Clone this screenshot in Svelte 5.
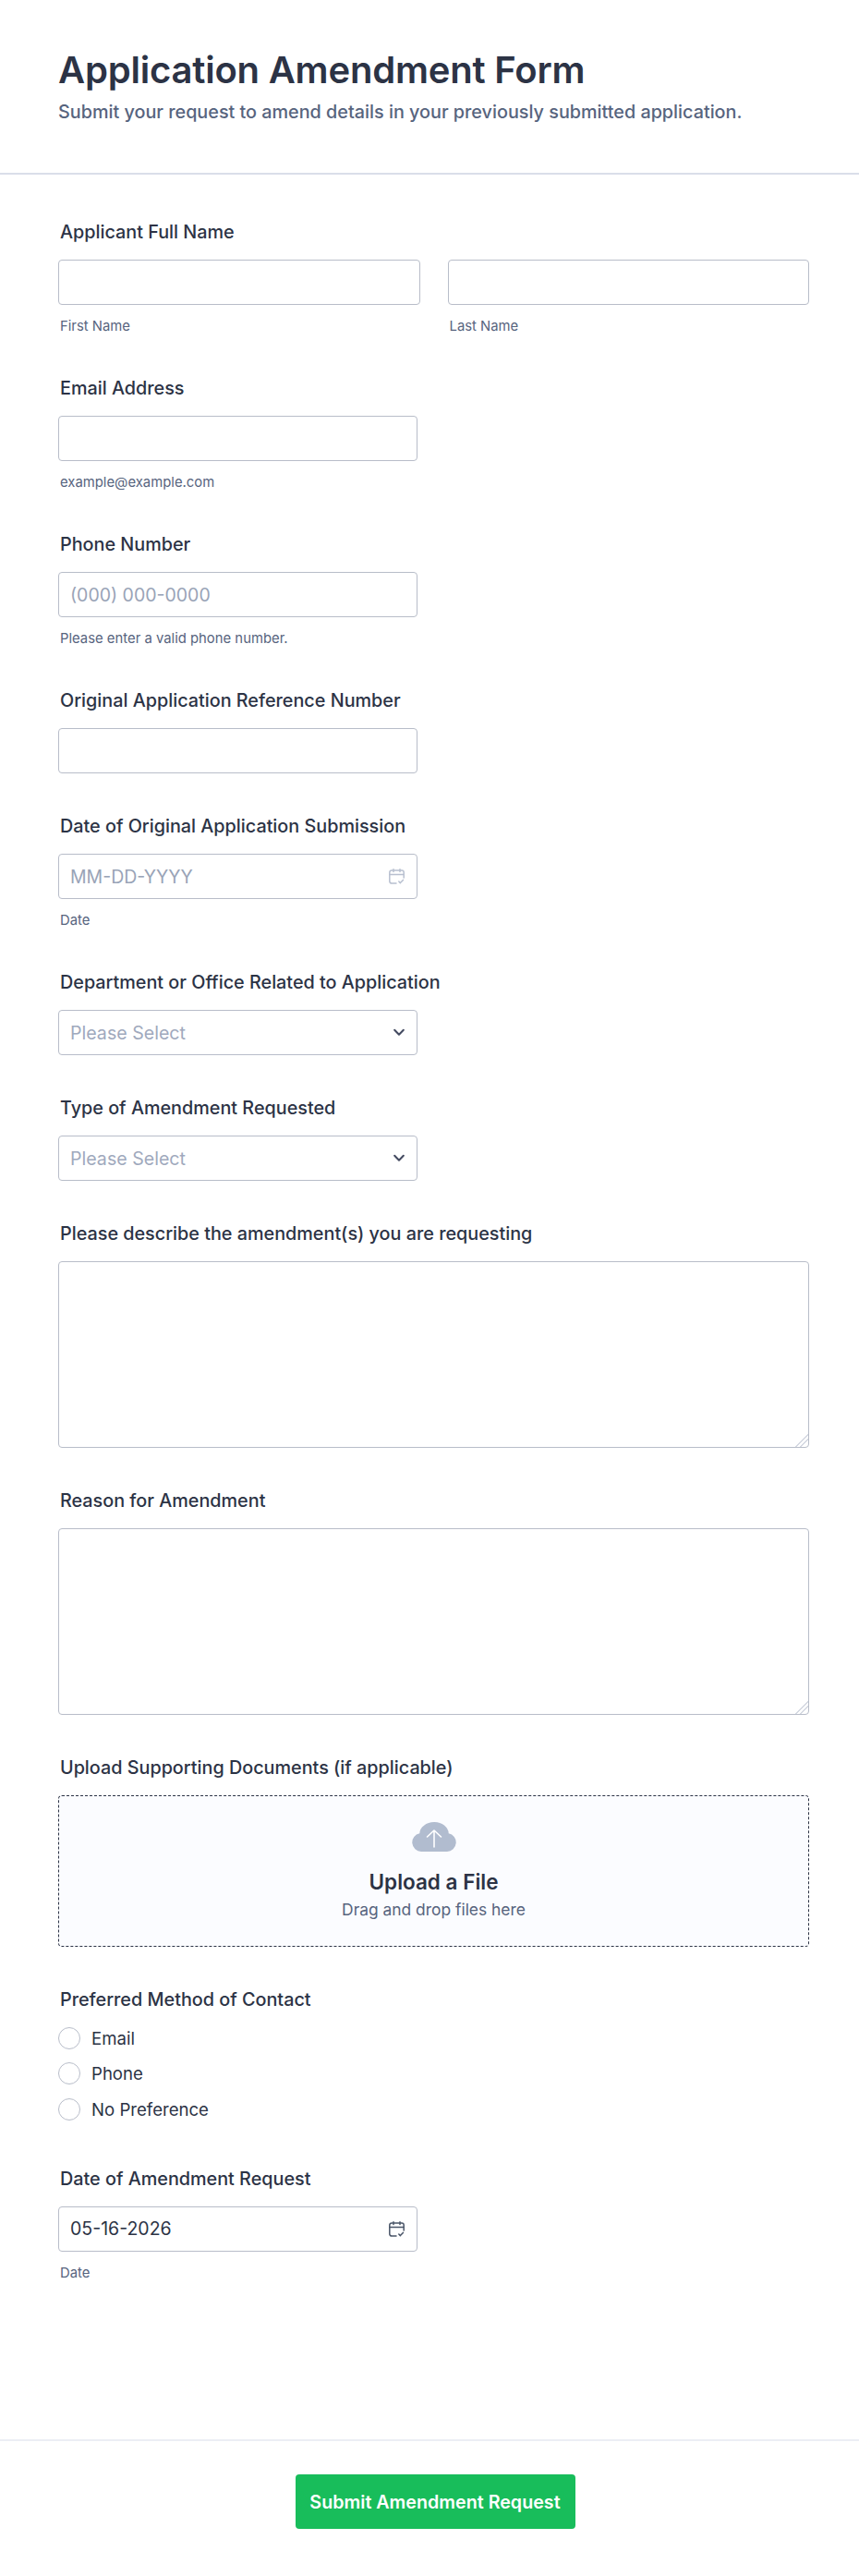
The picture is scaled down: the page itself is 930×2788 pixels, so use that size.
<script>
  const radios = ['Email', 'Phone', 'No Preference'];
</script>

<div class="page">
  <header class="head">
    <h1>Application Amendment Form</h1>
    <p>Submit your request to amend details in your previously submitted application.</p>
  </header>

  <form class="form">
    <div class="field">
      <span class="label">Applicant Full Name</span>
      <div class="pair">
        <div class="col"><input class="ctl full" type="text" /><span class="sub">First Name</span></div>
        <div class="col"><input class="ctl full" type="text" /><span class="sub">Last Name</span></div>
      </div>
    </div>

    <div class="field">
      <span class="label">Email Address</span>
      <input class="ctl" type="text" />
      <span class="sub">example@example.com</span>
    </div>

    <div class="field">
      <span class="label">Phone Number</span>
      <input class="ctl" type="text" placeholder="(000) 000-0000" />
      <span class="sub">Please enter a valid phone number.</span>
    </div>

    <div class="field">
      <span class="label">Original Application Reference Number</span>
      <input class="ctl" type="text" />
    </div>

    <div class="field">
      <span class="label">Date of Original Application Submission</span>
      <div class="wrap">
        <input class="ctl" type="text" placeholder="MM-DD-YYYY" />
        <svg class="cal faint" viewBox="0 0 17 17" fill="none" stroke="currentColor" stroke-width="1.5" stroke-linecap="round" stroke-linejoin="round">
          <path d="M8 16H3a2.2 2.2 0 0 1-2.2-2.2V4.2A2.2 2.2 0 0 1 3 2h11a2.2 2.2 0 0 1 2.2 2.2V10" />
          <path d="M1 6.5h15M5 .8v2.6M12 .8v2.6" />
          <path d="M10.8 14l1.6 1.6 3-3.2" />
        </svg>
      </div>
      <span class="sub">Date</span>
    </div>

    <div class="field">
      <span class="label">Department or Office Related to Application</span>
      <div class="wrap">
        <select class="ctl pick"><option>Please Select</option></select>
        <svg class="chev" viewBox="0 0 12 9" fill="none" stroke="currentColor" stroke-width="2" stroke-linecap="round" stroke-linejoin="round"><path d="M1.2 1.8 6 6.8l4.8-5" /></svg>
      </div>
    </div>

    <div class="field">
      <span class="label">Type of Amendment Requested</span>
      <div class="wrap">
        <select class="ctl pick"><option>Please Select</option></select>
        <svg class="chev" viewBox="0 0 12 9" fill="none" stroke="currentColor" stroke-width="2" stroke-linecap="round" stroke-linejoin="round"><path d="M1.2 1.8 6 6.8l4.8-5" /></svg>
      </div>
    </div>

    <div class="field">
      <span class="label">Please describe the amendment(s) you are requesting</span>
      <textarea class="area"></textarea>
    </div>

    <div class="field">
      <span class="label">Reason for Amendment</span>
      <textarea class="area"></textarea>
    </div>

    <div class="field">
      <span class="label">Upload Supporting Documents (if applicable)</span>
      <div class="drop">
        <svg class="cloud" viewBox="0 0 48 32">
          <path fill="#b1bccf" d="M10 32A10 10 0 0 1 8.3 12.2 16 12.5 0 0 1 24 0a15.5 12.5 0 0 1 15.7 12.2A10 10 0 0 1 38 32Z" />
          <path fill="none" stroke="#fff" stroke-width="1.6" stroke-linecap="round" stroke-linejoin="round" d="M24 27V9M16.5 16 24 9l7.5 7" />
        </svg>
        <strong>Upload a File</strong>
        <span>Drag and drop files here</span>
      </div>
    </div>

    <div class="field">
      <span class="label">Preferred Method of Contact</span>
      <div class="radios">
        {#each radios as r}
          <label class="radio"><input type="radio" name="contact" />{r}</label>
        {/each}
      </div>
    </div>

    <div class="field">
      <span class="label">Date of Amendment Request</span>
      <div class="wrap">
        <input class="ctl" type="text" value="05-16-2026" />
        <svg class="cal" viewBox="0 0 17 17" fill="none" stroke="currentColor" stroke-width="1.5" stroke-linecap="round" stroke-linejoin="round">
          <path d="M8 16H3a2.2 2.2 0 0 1-2.2-2.2V4.2A2.2 2.2 0 0 1 3 2h11a2.2 2.2 0 0 1 2.2 2.2V10" />
          <path d="M1 6.5h15M5 .8v2.6M12 .8v2.6" />
          <path d="M10.8 14l1.6 1.6 3-3.2" />
        </svg>
      </div>
      <span class="sub">Date</span>
    </div>
  </form>

  <footer class="foot">
    <button type="button" class="submit">Submit Amendment Request</button>
  </footer>
</div>

<style>
  :global(body) {
    margin: 0;
    background: #fff;
  }
  .page {
    font-family: Inter, "Liberation Sans", sans-serif;
    color: #2c3345;
    height: 2788px;
    display: flex;
    flex-direction: column;
  }
  .head {
    padding: 52px 0 50px 63px;
    border-bottom: 2px solid #dadee9;
    box-sizing: border-box;
    height: 189px;
  }
  h1 {
    margin: 0;
    font-size: 40px;
    line-height: 48px;
    font-weight: 600;
    letter-spacing: -0.2px;
  }
  .head p {
    margin: 8px 0 0;
    font-size: 19.8px;
    line-height: 26px;
    font-weight: 500;
    color: #57647e;
  }
  .form {
    flex: 1;
    padding: 50px 54px 0 63px;
    display: flex;
    flex-direction: column;
    gap: 45px;
  }
  .field {
    display: flex;
    flex-direction: column;
    align-items: flex-start;
  }
  .label {
    display: block;
    margin: 0 0 18px 2px;
    font-size: 19.8px;
    line-height: 24px;
    font-weight: 500;
  }
  .pair {
    display: flex;
    gap: 30px;
    width: 100%;
  }
  .col {
    flex: 1;
  }
  .sub {
    display: block;
    margin: 14px 0 0 2px;
    font-size: 14.85px;
    line-height: 19px;
    color: #57647e;
  }
  .ctl {
    display: block;
    box-sizing: border-box;
    width: 389px;
    height: 49px;
    padding: 0 12px;
    border: 1px solid #b8bdc9;
    border-radius: 4px;
    background: #fff;
    font: 400 19.5px Inter, sans-serif;
    color: #2c3345;
    outline: none;
  }
  .full {
    width: 100%;
  }
  .ctl::placeholder {
    color: #8894ab;
    opacity: 0.85;
  }
  .wrap {
    position: relative;
    width: 389px;
  }
  .pick {
    appearance: none;
    color: #a0a9bd;
    font-size: 19.6px;
  }
  .cal {
    position: absolute;
    right: 14px;
    top: 16px;
    width: 17px;
    height: 17px;
    color: #4a5568;
  }
  .cal.faint {
    color: #b8c0d0;
  }
  .chev {
    position: absolute;
    right: 14px;
    top: 20px;
    width: 12px;
    height: 9px;
    color: #434a60;
  }
  .area {
    display: block;
    box-sizing: border-box;
    width: 100%;
    height: 202px;
    border: 1px solid #b8bdc9;
    border-radius: 4px;
    background: #fff;
    outline: none;
  }
  .area::-webkit-resizer {
    background: linear-gradient(135deg, transparent 52%, #d5d9e2 52%, #d5d9e2 59%, transparent 59%, transparent 68%, #d5d9e2 68%, #d5d9e2 75%, transparent 75%);
  }
  .drop {
    box-sizing: border-box;
    width: 100%;
    height: 164px;
    border: 1px dashed #2c3345;
    border-radius: 4px;
    background: #fbfcff;
    display: flex;
    flex-direction: column;
    align-items: center;
    padding-top: 28px;
  }
  .cloud {
    width: 48px;
    height: 32px;
    margin-bottom: 19px;
  }
  .drop strong {
    font-size: 22.5px;
    line-height: 28px;
    font-weight: 600;
  }
  .drop span {
    margin-top: 5px;
    font-size: 17.4px;
    line-height: 22px;
    color: #57647e;
  }
  .radios {
    display: flex;
    flex-direction: column;
    gap: 14.4px;
    margin-bottom: 6px;
  }
  .radio {
    display: flex;
    align-items: center;
    gap: 12px;
    font-size: 18.6px;
    line-height: 24px;
  }
  .radio input {
    appearance: none;
    box-sizing: border-box;
    margin: 0;
    width: 24px;
    height: 24px;
    border: 1px solid #b8bdc9;
    border-radius: 50%;
    background: #fff;
  }
  .foot {
    box-sizing: border-box;
    height: 148px;
    border-top: 2px solid #eceef5;
    display: flex;
    justify-content: center;
    padding: 36px 0 0 12px;
  }
  .submit {
    width: 303px;
    height: 59px;
    border: none;
    border-radius: 4px;
    background: #18bd5b;
    color: #fff;
    font: 600 19.7px Inter, sans-serif;
    padding: 0;
  }
</style>
